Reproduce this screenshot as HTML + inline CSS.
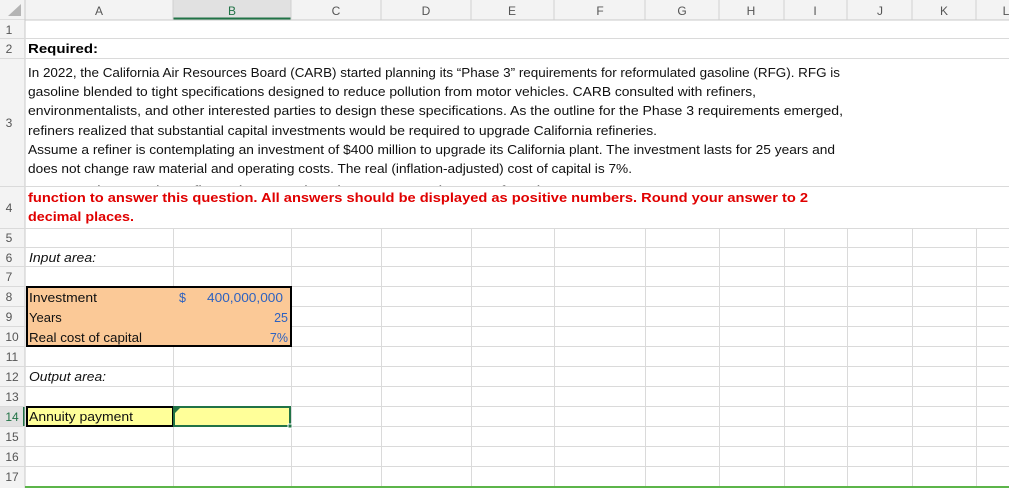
<!DOCTYPE html>
<html><head><meta charset="utf-8"><style>
html,body{margin:0;padding:0;background:#fff;width:1009px;height:488px;overflow:hidden}
svg{display:block}
text{font-family:"Liberation Sans",sans-serif}
</style></head><body>
<svg width="1009" height="488" viewBox="0 0 1009 488" xmlns="http://www.w3.org/2000/svg">
<defs><clipPath id="c3"><rect x="25" y="59" width="984" height="127"/></clipPath></defs>
<rect width="1009" height="488" fill="#fff"/>
<rect x="0" y="0" width="1009" height="20" fill="#f3f3f3"/>
<rect x="173" y="0" width="118" height="20" fill="#e1e1e1"/>
<rect x="173" y="17.5" width="118" height="2.5" fill="#217346"/>
<line x1="0" y1="20" x2="1009" y2="20" stroke="#c8c8c8"/>
<rect x="0" y="20" width="25" height="468" fill="#f3f3f3"/>
<rect x="0" y="406" width="25" height="20" fill="#e1e1e1"/>
<rect x="23" y="406" width="2" height="20" fill="#217346"/>
<line x1="25" y1="0" x2="25" y2="488" stroke="#c8c8c8"/>
<polygon points="8,16 21,16 21,4" fill="#b4b4b4"/>
<g stroke="#d0d0d0">
<line x1="173" y1="0" x2="173" y2="20"/><line x1="291" y1="0" x2="291" y2="20"/>
<line x1="381" y1="0" x2="381" y2="20"/><line x1="471" y1="0" x2="471" y2="20"/>
<line x1="554" y1="0" x2="554" y2="20"/><line x1="645" y1="0" x2="645" y2="20"/>
<line x1="719" y1="0" x2="719" y2="20"/><line x1="784" y1="0" x2="784" y2="20"/>
<line x1="847" y1="0" x2="847" y2="20"/><line x1="912" y1="0" x2="912" y2="20"/>
<line x1="976" y1="0" x2="976" y2="20"/>
</g>
<g font-size="12" fill="#555" text-anchor="middle">
<text x="99" y="15">A</text><text x="232" y="15" fill="#217346">B</text><text x="336" y="15">C</text>
<text x="426" y="15">D</text><text x="512" y="15">E</text><text x="600" y="15">F</text>
<text x="682" y="15">G</text><text x="751" y="15">H</text><text x="815" y="15">I</text>
<text x="880" y="15">J</text><text x="944" y="15">K</text><text x="1006" y="15">L</text>
</g>
<g stroke="#dadada">
<line x1="0" y1="38.5" x2="1009" y2="38.5"/><line x1="0" y1="58.5" x2="1009" y2="58.5"/>
<line x1="0" y1="186.5" x2="1009" y2="186.5"/><line x1="0" y1="228.5" x2="1009" y2="228.5"/>
<line x1="0" y1="247.5" x2="1009" y2="247.5"/><line x1="0" y1="266.5" x2="1009" y2="266.5"/>
<line x1="0" y1="286.5" x2="1009" y2="286.5"/><line x1="0" y1="306.5" x2="1009" y2="306.5"/>
<line x1="0" y1="326.5" x2="1009" y2="326.5"/><line x1="0" y1="346.5" x2="1009" y2="346.5"/>
<line x1="0" y1="366.5" x2="1009" y2="366.5"/><line x1="0" y1="386.5" x2="1009" y2="386.5"/>
<line x1="0" y1="406.5" x2="1009" y2="406.5"/><line x1="0" y1="426.5" x2="1009" y2="426.5"/>
<line x1="0" y1="446.5" x2="1009" y2="446.5"/><line x1="0" y1="466.5" x2="1009" y2="466.5"/>
</g>
<g stroke="#dadada">
<line x1="173.5" y1="228" x2="173.5" y2="488"/><line x1="291.5" y1="228" x2="291.5" y2="488"/>
<line x1="381.5" y1="228" x2="381.5" y2="488"/><line x1="471.5" y1="228" x2="471.5" y2="488"/>
<line x1="554.5" y1="228" x2="554.5" y2="488"/><line x1="645.5" y1="228" x2="645.5" y2="488"/>
<line x1="719.5" y1="228" x2="719.5" y2="488"/><line x1="784.5" y1="228" x2="784.5" y2="488"/>
<line x1="847.5" y1="228" x2="847.5" y2="488"/><line x1="912.5" y1="228" x2="912.5" y2="488"/>
<line x1="976.5" y1="228" x2="976.5" y2="488"/>
</g>
<g font-size="12" fill="#555" text-anchor="middle">
<text x="9" y="34">1</text><text x="9" y="53">2</text><text x="9" y="127">3</text>
<text x="9" y="212">4</text><text x="9" y="242">5</text><text x="9" y="262">6</text>
<text x="9" y="281">7</text><text x="9" y="301">8</text><text x="9" y="321">9</text>
<text x="12" y="341">10</text><text x="12" y="361">11</text><text x="12" y="381">12</text>
<text x="12" y="401">13</text><text x="12" y="421" fill="#217346">14</text><text x="12" y="441">15</text>
<text x="12" y="461">16</text><text x="12" y="481">17</text>
</g>
<text x="28" y="53" font-size="13" font-weight="bold" fill="#000" textLength="70" lengthAdjust="spacingAndGlyphs">Required:</text>
<g font-size="12.5" fill="#111" clip-path="url(#c3)">
<text x="28" y="77" textLength="812" lengthAdjust="spacingAndGlyphs">In 2022, the California Air Resources Board (CARB) started planning its “Phase 3” requirements for reformulated gasoline (RFG). RFG is</text>
<text x="28" y="96" textLength="728" lengthAdjust="spacingAndGlyphs">gasoline blended to tight specifications designed to reduce pollution from motor vehicles. CARB consulted with refiners,</text>
<text x="28" y="115" textLength="815" lengthAdjust="spacingAndGlyphs">environmentalists, and other interested parties to design these specifications. As the outline for the Phase 3 requirements emerged,</text>
<text x="28" y="135" textLength="629" lengthAdjust="spacingAndGlyphs">refiners realized that substantial capital investments would be required to upgrade California refineries.</text>
<text x="28" y="154" textLength="807" lengthAdjust="spacingAndGlyphs">Assume a refiner is contemplating an investment of $400 million to upgrade its California plant. The investment lasts for 25 years and</text>
<text x="28" y="173" textLength="604" lengthAdjust="spacingAndGlyphs">does not change raw material and operating costs. The real (inflation-adjusted) cost of capital is 7%.</text>
<text x="28" y="195" textLength="540" lengthAdjust="spacingAndGlyphs">How much must the refiner charge to break even? Use the PMT function?</text>
</g>
<g font-size="12.5" font-weight="bold" fill="#e00000">
<text x="28" y="202" textLength="780" lengthAdjust="spacingAndGlyphs">function to answer this question. All answers should be displayed as positive numbers. Round your answer to 2</text>
<text x="28" y="221" textLength="106" lengthAdjust="spacingAndGlyphs">decimal places.</text>
</g>
<g font-size="12.5" font-style="italic" fill="#111">
<text x="29" y="262" textLength="67" lengthAdjust="spacingAndGlyphs">Input area:</text>
<text x="29" y="381" textLength="77" lengthAdjust="spacingAndGlyphs">Output area:</text>
</g>
<rect x="27" y="287" width="264" height="59" fill="#fbc997" stroke="#000" stroke-width="2"/>
<g font-size="12.5" fill="#111">
<text x="29" y="302" textLength="68" lengthAdjust="spacingAndGlyphs">Investment</text>
<text x="29" y="322" font-size="13">Years</text>
<text x="29" y="342" textLength="113" lengthAdjust="spacingAndGlyphs">Real cost of capital</text>
</g>
<g font-size="12.5" fill="#2e62c0">
<text x="179" y="302">$</text>
<text x="283" y="302" text-anchor="end" textLength="76" lengthAdjust="spacingAndGlyphs">400,000,000</text>
<text x="288" y="322" text-anchor="end">25</text>
<text x="288" y="342" text-anchor="end">7%</text>
</g>
<rect x="27" y="407" width="146" height="19" fill="#ffff99" stroke="#000" stroke-width="2"/>
<text x="29" y="421" font-size="12.5" fill="#111" textLength="104" lengthAdjust="spacingAndGlyphs">Annuity payment</text>
<rect x="174" y="407" width="116" height="19" fill="#ffff99" stroke="#217346" stroke-width="2"/>
<polygon points="174,407 181,407 174,414" fill="#217346"/>
<rect x="288" y="424" width="4" height="4" fill="#217346" stroke="#fff" stroke-width="1"/>
<rect x="25" y="486" width="984" height="2" fill="#5cb54a"/>
</svg>
</body></html>
